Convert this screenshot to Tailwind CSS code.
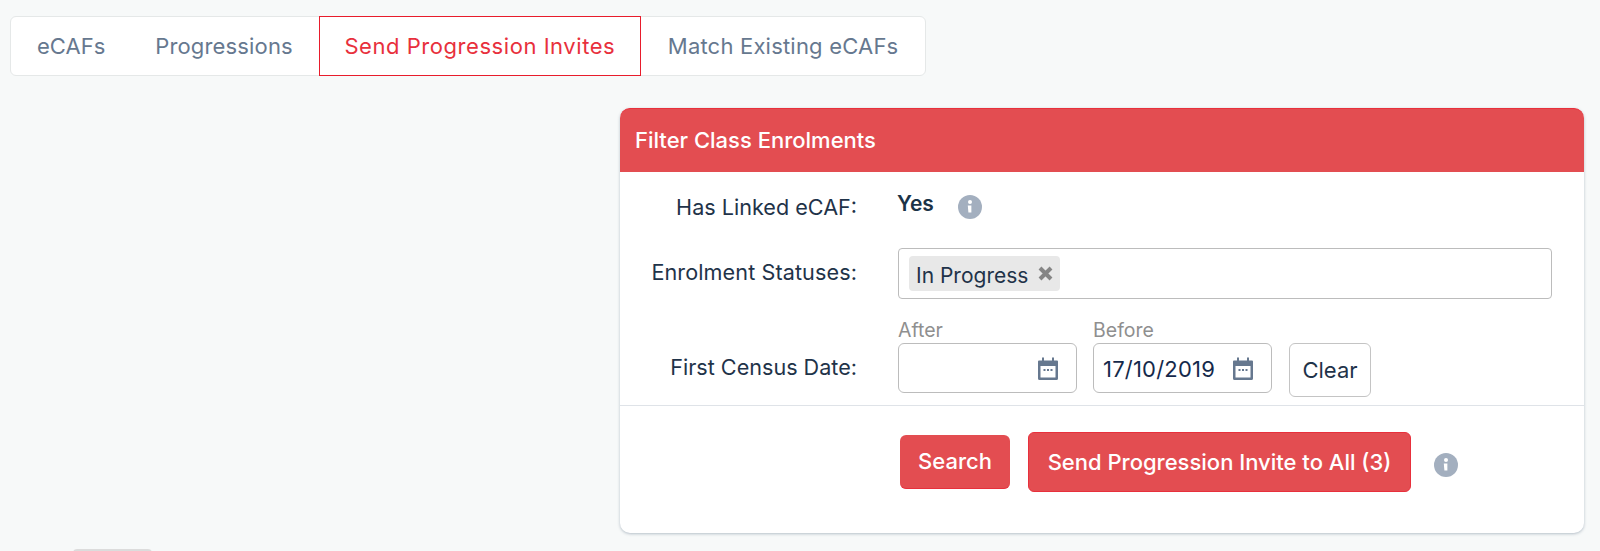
<!DOCTYPE html>
<html lang="en">
<head>
    <meta charset="UTF-8">
    <meta name="viewport" content="width=device-width, initial-scale=1.0">
    <title>Send Progression Invites</title>
    <script src="https://cdn.jsdelivr.net/npm/@tailwindcss/browser@4"></script>
</head>
<body class="bg-[#f7f9f9] font-['Inter',sans-serif] text-[21.6px] text-[#1f3349] h-[551px] overflow-hidden">

    <!-- Tabs -->
    <div class="pt-4 pl-[10px]">
        <div class="flex h-[60px] w-[916px] bg-white border border-[#e5e8e8] rounded-md text-[22px] text-[#66788f]">
            <a class="pl-[26px] pr-[26px] flex items-center">eCAFs</a>
            <a class="pl-[24px] pr-[26px] flex items-center tracking-[0.15px]">Progressions</a>
            <a class="w-[322px] -my-px flex items-center justify-center text-[#e8303c] border border-[#e81c2c] tracking-[0.55px]">Send Progression Invites</a>
            <a class="pl-[27px] flex items-center tracking-[0.2px]">Match Existing eCAFs</a>
        </div>
    </div>

    <!-- Filter card -->
    <div class="mt-[32px] ml-[620px] w-[964px] h-[425px] bg-white rounded-[10px] shadow-[0_1px_3px_rgba(100,120,140,0.45)]">
        <div class="h-[64px] px-[15px] flex items-center bg-[#e34d51] border-t border-[#e8303c] rounded-t-[10px] text-white font-[450] text-[22px]">Filter Class Enrolments</div>

        <div class="h-[233px]">
            <div class="flex items-center h-[68px] pt-[2px]">
                <div class="w-[237px] text-right">Has Linked eCAF:</div>
                <div class="ml-[40px] -mt-[6px] font-semibold text-[21px] text-[#1b3347]">Yes</div>
                <svg class="ml-[24px] -mt-px w-6 h-6" viewBox="0 0 24 24"><circle cx="12" cy="12" r="12" fill="#a3afbf"/><circle cx="12" cy="7" r="2" fill="#fff"/><path d="M9.800 10.500h3.600v7h-3z" fill="#fff"/></svg>
            </div>
            <div class="flex items-center h-[51px] mt-[8px]">
                <div class="w-[237px] text-right -mt-[2px] tracking-[0.1px]">Enrolment Statuses:</div>
                <div class="ml-[41px] w-[654px] h-[51px] border border-[#bcbcbc] rounded flex items-center px-[10px]">
                    <span class="w-[151px] h-[35px] bg-[#e8e8e8] rounded flex items-center justify-between px-[7px] text-[21px]">
                        <span class="mt-[4px]">In Progress</span>
                        <svg class="w-[15px] h-[15px]" viewBox="0 0 15 15"><path d="M2 2l11 11M13 2l-11 11" stroke="#858585" stroke-width="4"/></svg>
                    </span>
                </div>
            </div>
            <div class="flex items-start mt-[19px]">
                <div class="w-[237px] text-right mt-[33px]">First Census Date:</div>
                <div class="ml-[41px] w-[179px]">
                    <div class="text-[19.500px] leading-[24px] text-[#8f8f8f]">After</div>
                    <div class="h-[50px] mt-px pt-[2px] border border-[#bcbcbc] rounded-md flex items-center justify-end pr-[16px]">
                        <svg class="w-6 h-6" viewBox="0 0 24 24"><path d="M3 3.500h18a1 1 0 0 1 1 1v17a1.500 1.500 0 0 1-1.500 1.500h-17A1.500 1.500 0 0 1 2 21.500v-17a1 1 0 0 1 1-1z" fill="#66788f"/><path d="M6 0.500h2v4H6zM16 0.500h2v4h-2z" fill="#66788f"/><path d="M4.500 9h15v11.500h-15z" fill="#fff"/><path d="M7.500 12h2v2h-2zM11 12h2v2h-2zM14.500 12h2v2h-2z" fill="#66788f"/></svg>
                    </div>
                </div>
                <div class="ml-[16px] w-[179px]">
                    <div class="text-[19.500px] leading-[24px] text-[#8f8f8f]">Before</div>
                    <div class="h-[50px] mt-px pt-[2px] border border-[#bcbcbc] rounded-md flex items-center justify-between pl-[9px] pr-[16px] text-[#15294b] text-[22px] tracking-[0.2px]">17/10/2019
                        <svg class="w-6 h-6" viewBox="0 0 24 24"><path d="M3 3.500h18a1 1 0 0 1 1 1v17a1.500 1.500 0 0 1-1.500 1.500h-17A1.500 1.500 0 0 1 2 21.500v-17a1 1 0 0 1 1-1z" fill="#66788f"/><path d="M6 0.500h2v4H6zM16 0.500h2v4h-2z" fill="#66788f"/><path d="M4.500 9h15v11.500h-15z" fill="#fff"/><path d="M7.500 12h2v2h-2zM11 12h2v2h-2zM14.500 12h2v2h-2z" fill="#66788f"/></svg>
                    </div>
                </div>
                <button class="ml-[17px] mt-[25px] w-[82px] h-[54px] border border-[#c4c4c4] rounded-md bg-white text-[22px]">Clear</button>
            </div>
        </div>

        <div class="border-t border-[#dfe3e8] flex items-start pt-[26px] pl-[280px]">
            <button class="w-[110px] h-[54px] mt-[3px] bg-[#e34d51] border-b border-[#e8303c] rounded-md text-white font-[450] text-[22px]">Search</button>
            <button class="ml-[18px] w-[383px] h-[60px] bg-[#e34d51] border border-[#e8303c] rounded-md text-white font-[450] text-[22px]">Send Progression Invite to All (3)</button>
            <svg class="ml-[23px] mt-[21px] w-6 h-6" viewBox="0 0 24 24"><circle cx="12" cy="12" r="12" fill="#a3afbf"/><circle cx="12" cy="7" r="2" fill="#fff"/><path d="M9.800 10.500h3.600v7h-3z" fill="#fff"/></svg>
        </div>
    </div>

    <!-- Cut off by the bottom of the window -->
    <div class="mt-[16px] ml-[73px] w-[79px] h-4 bg-[#dcdcdc] rounded"></div>
</body>
</html>
